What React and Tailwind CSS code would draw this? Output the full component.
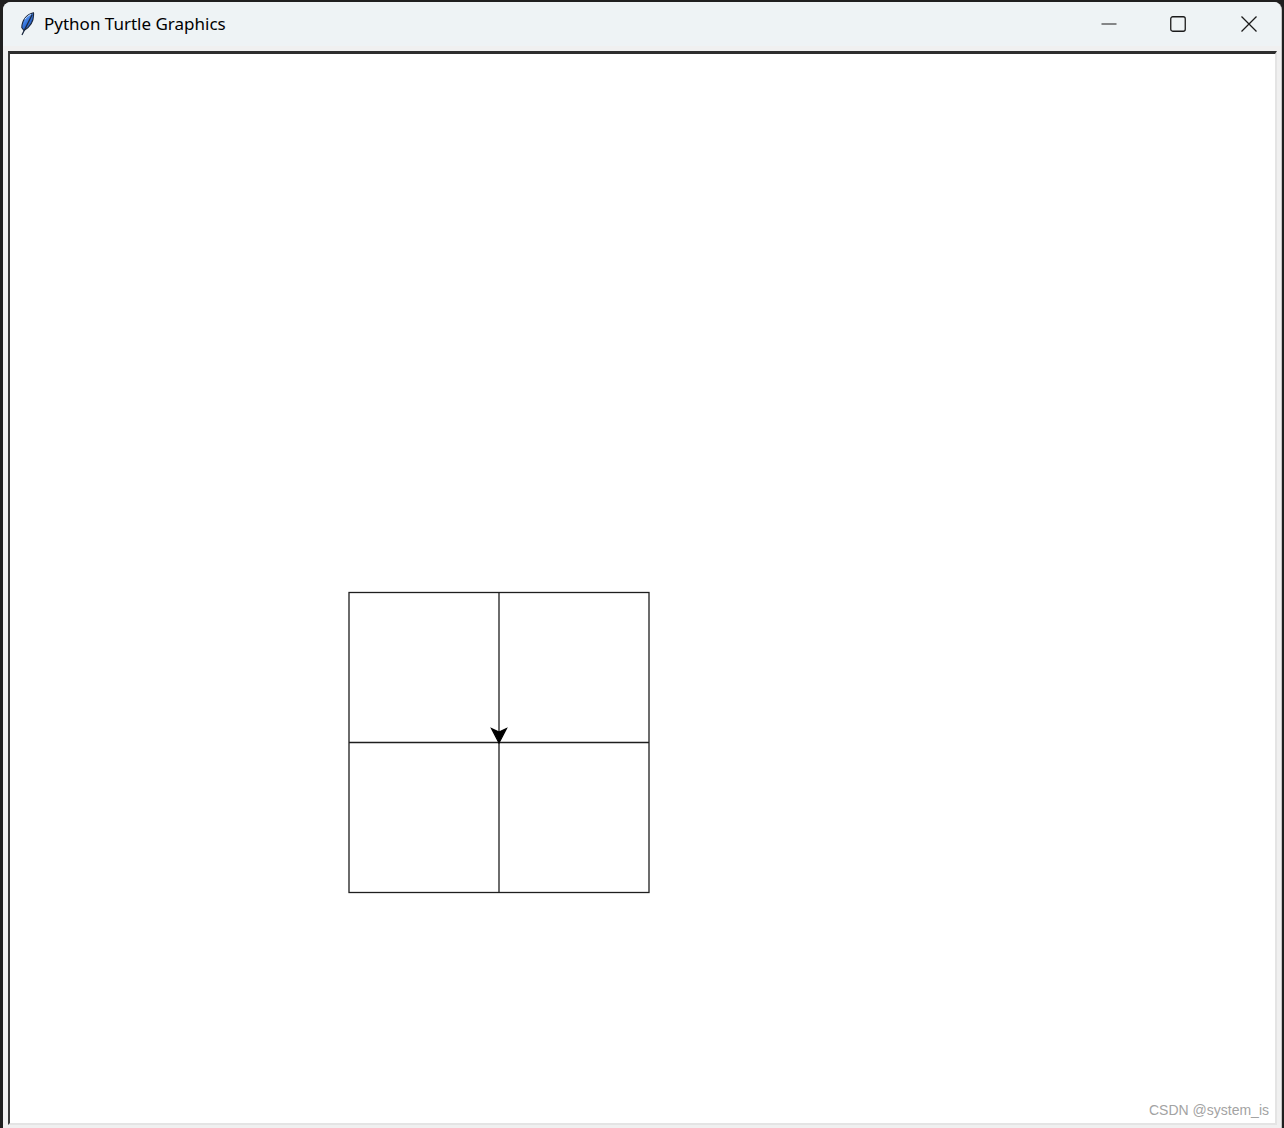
import React from 'react';

const Feather = () => (
  <svg width="17" height="24" viewBox="0 0 17 24">
    <defs>
      <linearGradient id="fg" x1="0.2" y1="0" x2="0.9" y2="1">
        <stop offset="0" stopColor="#8ec0ff" />
        <stop offset="0.45" stopColor="#3576e0" />
        <stop offset="1" stopColor="#173f8c" />
      </linearGradient>
    </defs>
    <path d="M15.5 0.8 C9.5 2 4 7.5 3.8 15.5 L6 18.5 C12 15 16.2 9 15.5 0.8 Z" fill="url(#fg)" stroke="#1c2940" strokeWidth="1.1" />
    <path d="M7 7 C8.5 5 10.5 3.5 12.5 2.6" stroke="#cfe3ff" strokeWidth="1" fill="none" strokeLinecap="round" />
    <path d="M14 3 L4.2 22.5" stroke="#1c2940" strokeWidth="1.3" strokeLinecap="round" />
  </svg>
);

const WindowButtons = () => (
  <div className="flex h-full">
    <div className="w-[60px] h-full flex items-center justify-center">
      <svg width="16" height="16" viewBox="0 0 16 16">
        <path d="M0.5 8 H15.5" stroke="#1a1a1a" strokeWidth="1.2" />
      </svg>
    </div>
    <div className="w-[78px] h-full flex items-center justify-center">
      <svg width="16" height="16" viewBox="0 0 16 16">
        <rect x="0.75" y="0.75" width="14.5" height="14.5" rx="2" fill="none" stroke="#1a1a1a" strokeWidth="1.3" />
      </svg>
    </div>
    <div className="w-[64px] h-full flex items-center justify-center">
      <svg width="16" height="16" viewBox="0 0 16 16">
        <path d="M0.5 0.5 L15.5 15.5 M15.5 0.5 L0.5 15.5" stroke="#1a1a1a" strokeWidth="1.3" />
      </svg>
    </div>
  </div>
);

const TurtleDrawing = () => (
  <svg className="absolute inset-0" width="1266" height="1067">
    <g stroke="#1e1e1e" strokeWidth="1.3" fill="none">
      <rect x="339" y="538.5" width="300" height="300" />
      <path d="M489 538.5 V838.5" />
      <path d="M339 688.5 H639" />
    </g>
    <polygon points="489,689 481.5,674.5 489,678 496.5,674.5" fill="#000" stroke="#000" strokeWidth="1.2" />
  </svg>
);

export default function App() {
  return (
    <div className="w-[1284px] h-[1128px] bg-[#1f1f1f] pt-[2px] pl-[3px] overflow-hidden">
      <div className="w-[1279px] h-[1126px] bg-[#f0f0f0] rounded-t-[8px] border-r border-[#c4c4c4] flex flex-col overflow-hidden">
        {/* title bar */}
        <div className="h-[44px] bg-[#eef3f5] flex items-center justify-between shrink-0">
          <div className="flex items-center pl-[15px] gap-[9px]">
            <Feather />
            <span className="text-[17px] text-black" style={{ fontFamily: '"Noto Sans", "Open Sans", sans-serif' }}>
              Python Turtle Graphics
            </span>
          </div>
          <WindowButtons />
        </div>

        {/* canvas frame */}
        <div className="flex-1 pt-[5px] pl-[5px] pr-[4px] pb-[3px] flex">
          <div className="flex-1 border-t-[3px] border-l-[2px] border-t-[#2e2e2e] border-l-[#3a3a3a] border-r-2 border-b-2 border-r-[#e4e4e4] border-b-[#e4e4e4] flex">
            <div className="relative flex-1 bg-white">
              <TurtleDrawing />
              <span
                className="absolute right-[6px] bottom-[2px] text-[14px] text-[#a3a3a3]"
                style={{ fontFamily: '"Liberation Sans", Arial, sans-serif' }}
              >
                CSDN @system_is
              </span>
            </div>
          </div>
        </div>
      </div>
    </div>
  );
}
